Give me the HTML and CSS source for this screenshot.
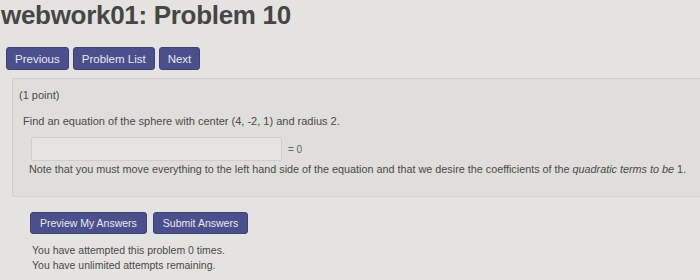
FILE: index.html
```html
<!DOCTYPE html>
<html lang="en">
<head>
  <meta charset="UTF-8" />
  <title>webwork01: Problem 10</title>
  <link rel="stylesheet" href="styles.css">
</head>
<body>

  <h1 class="page-title">webwork01: Problem 10</h1>

  <div class="nav-buttons">
    <button class="btn">Previous</button>
    <button class="btn">Problem List</button>
    <button class="btn">Next</button>
  </div>

  <div class="problem-box">
    <p class="points">(1 point)</p>
    <p class="question">Find an equation of the sphere with center (4, -2, 1) and radius 2.</p>
    <div class="answer-row">
      <input type="text" class="answer-input">
      <span class="equals">= 0</span>
    </div>
    <p class="note">Note that you must move everything to the left hand side of the equation and that we desire the coefficients of the <i>quadratic terms to be</i> 1.</p>
  </div>

  <div class="submit-buttons">
    <button class="btn">Preview My Answers</button>
    <button class="btn">Submit Answers</button>
  </div>

  <div class="attempts">
    <p>You have attempted this problem 0 times.</p>
    <p>You have unlimited attempts remaining.</p>
  </div>

</body>
</html>
```

FILE: styles.css
```css
body {
  font-family: "Liberation Sans", Arial, sans-serif;
  background: #e5e3e0;
  color: #4a4a4a;
  margin: 0;
  padding: 0;
  overflow: hidden;
}

.page-title {
  font-size: 26px;
  font-weight: bold;
  color: #464646;
  margin: 0;
  padding: 0 0 0 1px;
  line-height: 30px;
  height: 30px;
  letter-spacing: -0.3px;
}

.nav-buttons {
  display: flex;
  gap: 4px;
  margin: 17px 0 0 6px;
}

.btn {
  font-family: "Liberation Sans", Arial, sans-serif;
  font-size: 11.5px;
  color: #e8e8f2;
  background: #4b4f8c;
  border: 1px solid #3f4277;
  border-radius: 3px;
  height: 23px;
  padding: 0 8px;
  cursor: pointer;
}

.problem-box {
  margin: 8px 0 0 12px;
  background: #e0deda;
  border: 1px solid #d2d0cc;
  border-right: none;
  padding: 10px 0 0 6px;
  height: 107px;
}

.problem-box p {
  margin: 0;
  font-size: 11px;
}

.problem-box .question {
  margin-top: 14px;
  margin-left: 4px;
}

.answer-row {
  display: flex;
  align-items: center;
  gap: 6px;
  margin: 10px 0 0 12px;
}

.answer-input {
  width: 249px;
  height: 22px;
  border: 1px solid #d0cecb;
  background: #e6e4e1;
  border-radius: 2px;
  padding: 0;
}

.equals {
  font-size: 10px;
  color: #666;
}

.problem-box .note {
  margin: 2px 0 0 10px;
  font-size: 10.8px;
}

.submit-buttons {
  display: flex;
  gap: 6px;
  margin: 15px 0 0 30px;
}

.submit-buttons .btn {
  height: 22px;
  font-size: 10.5px;
  padding: 0 9px;
}

.attempts {
  margin: 9px 0 0 32px;
}

.attempts p {
  margin: 0;
  font-size: 10.5px;
  line-height: 15px;
}
```
